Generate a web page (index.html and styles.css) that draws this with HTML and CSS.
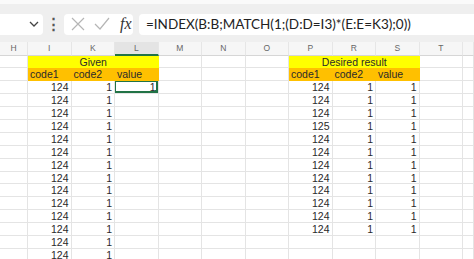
FILE: index.html
```html
<!DOCTYPE html>
<html lang="en">
<head>
  <meta charset="UTF-8" />
  <meta name="viewport" content="width=device-width, initial-scale=1.0" />
  <title>INDEX MATCH</title>
  <link rel="stylesheet" href="styles.css">
</head>
<body>
  <div class="toolbar">
    <div class="namebox">
      <svg class="chev" width="10" height="6" viewBox="0 0 10 6"><path d="M1 1 L5 5 L9 1" fill="none" stroke="#444" stroke-width="1.3"/></svg>
    </div>
    <div class="dots">⋮</div>
    <div class="fxbox">
      <svg width="14" height="14" viewBox="0 0 14 14"><path d="M1 1 L13 13 M13 1 L1 13" stroke="#b5b5b5" stroke-width="1.2"/></svg>
      <svg width="16" height="14" viewBox="0 0 16 14"><path d="M1 7 L6 12 L15 1" fill="none" stroke="#b5b5b5" stroke-width="1.2"/></svg>
      <span class="fx">fx</span>
    </div>
    <div class="formula">=INDEX(B:B;MATCH(1;(D:D=I3)*(E:E=K3);0))</div>
  </div>

  <div class="sheet" id="sheet">
    <!-- cells are built in script.js -->
  </div>

  <script src="script.js"></script>
</body>
</html>
```

FILE: styles.css
```css
body {
  margin: 0;
  background: #fff;
  font-family: 'Liberation Sans', Arial, sans-serif;
  overflow: hidden;
  width: 474px;
  height: 259px;
}
.toolbar {
  height: 42px;
  background: #efefef;
  border-top: 4px solid #fafafa;
  box-sizing: border-box;
  display: flex;
  align-items: center;
  padding-top: 2px;
}
.namebox {
  width: 43px;
  height: 21px;
  background: #fff;
  border-radius: 0 4px 4px 0;
  display: flex;
  align-items: center;
  justify-content: flex-end;
}
.chev {
  margin-right: 4px;
}
.dots {
  width: 21px;
  text-align: center;
  font-size: 15px;
  color: #555;
  font-weight: bold;
}
.fxbox {
  width: 69px;
  height: 21px;
  background: #fff;
  border-radius: 4px;
  display: flex;
  align-items: center;
  gap: 9px;
  padding-left: 7px;
  box-sizing: border-box;
}
.fx {
  font-family: 'Liberation Serif', 'DejaVu Serif', serif;
  font-style: italic;
  font-size: 16px;
  color: #333;
  margin-left: 1px;
}
.formula {
  flex: 1;
  margin-left: 6px;
  height: 21px;
  background: #fff;
  border-radius: 4px 0 0 4px;
  font-family: Lato, sans-serif;
  font-size: 13.5px;
  line-height: 21px;
  color: #222;
  padding-left: 7px;
  white-space: nowrap;
  overflow: hidden;
}
.sheet {
  display: grid;
  grid-template-columns: 28px repeat(10, 43.5px) 1fr;
  grid-template-rows: 13.5px repeat(16, 12.9px);
  font-size: 10.5px;
  color: #2a2a2a;
}
.cell {
  border-right: 1px solid #e4e4e4;
  border-bottom: 1px solid #e4e4e4;
  box-sizing: border-box;
  padding: 0 2px;
  line-height: 12px;
  white-space: nowrap;
  overflow: hidden;
  position: relative;
}
.head {
  background: #f6f6f6;
  color: #666;
  font-size: 8.5px;
  text-align: center;
  line-height: 13px;
  border-right: 1px solid #e6e6e6;
  border-bottom: 1px solid #d6d6d6;
}
.head.active {
  background: #e4e4e4;
  border-bottom: 2px solid #217346;
}
.num {
  text-align: right;
}
.title {
  background: #ffff00;
  text-align: center;
  border-right: none;
  border-bottom: none;
}
.label {
  background: #ffc000;
  border-right: none;
  border-bottom: none;
}
.selected::after {
  content: "";
  position: absolute;
  left: -1px;
  top: -1px;
  right: 0;
  bottom: 0;
  border: 2px solid #217346;
}
.selected::before {
  content: "";
  position: absolute;
  right: -1px;
  bottom: -1px;
  width: 4px;
  height: 4px;
  background: #217346;
  z-index: 1;
}
```

FILE: script.js
```js
const sheet = document.getElementById("sheet");
const cols = ["H", "I", "K", "L", "M", "N", "O", "P", "R", "S", "T", ""];
const rightCodes = [124, 124, 124, 125, 124, 124, 124, 124, 124, 124, 124, 124];

function addCell(text, cls, style) {
  const div = document.createElement("div");
  div.className = "cell " + (cls || "");
  div.textContent = text;
  if (style) div.setAttribute("style", style);
  sheet.appendChild(div);
}

// column letters
cols.forEach(c => addCell(c, c === "L" ? "head active" : "head"));

// row 1: titles
addCell("");
addCell("Given", "title", "grid-column: span 3");
addCell(""); addCell(""); addCell("");
addCell("Desired result", "title", "grid-column: span 3");
addCell(""); addCell("");

// row 2: column labels
addCell("");
["code1", "code2", "value"].forEach(t => addCell(t, "label"));
addCell(""); addCell(""); addCell("");
["code1", "code2", "value"].forEach(t => addCell(t, "label"));
addCell(""); addCell("");

// data rows
for (let i = 0; i < 14; i++) {
  addCell("");
  addCell("124", "num");
  addCell("1", "num");
  addCell(i === 0 ? "1" : "", i === 0 ? "num selected" : "");
  addCell(""); addCell(""); addCell("");
  if (i < rightCodes.length) {
    addCell(String(rightCodes[i]), "num");
    addCell("1", "num");
    addCell("1", "num");
  } else {
    addCell(""); addCell(""); addCell("");
  }
  addCell(""); addCell("");
}
```
